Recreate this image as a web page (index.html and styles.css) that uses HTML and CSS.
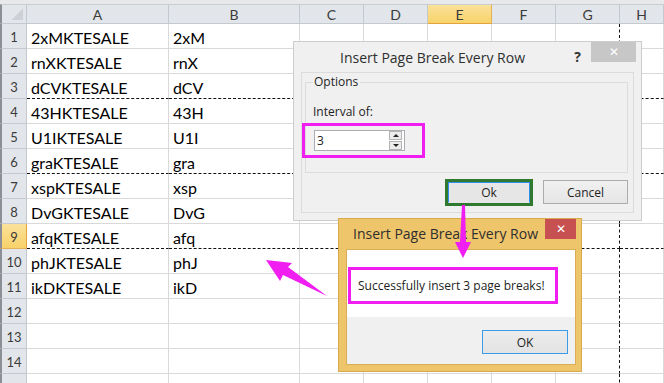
FILE: index.html
```html
<!DOCTYPE html>
<html lang="en">
<head>
  <meta charset="UTF-8" />
  <title>Insert Page Break Every Row</title>
  <link rel="stylesheet" href="styles.css">
</head>
<body>
  <div class="sheet">
    <table class="grid">
      <colgroup>
        <col class="c-hd"><col class="c-a"><col class="c-b">
        <col class="c-n"><col class="c-n"><col class="c-n"><col class="c-n"><col class="c-n">
        <col class="c-h">
      </colgroup>
      <thead>
        <tr>
          <th class="corner"></th><th>A</th><th>B</th><th>C</th><th>D</th>
          <th class="sel">E</th><th>F</th><th>G</th><th>H</th>
        </tr>
      </thead>
      <tbody>
        <tr><th>1</th><td>2xMKTESALE</td><td>2xM</td><td></td><td></td><td></td><td></td><td></td><td></td></tr>
        <tr><th>2</th><td>rnXKTESALE</td><td>rnX</td><td></td><td></td><td></td><td></td><td></td><td></td></tr>
        <tr class="brk"><th>3</th><td>dCVKTESALE</td><td>dCV</td><td></td><td></td><td></td><td></td><td></td><td></td></tr>
        <tr><th>4</th><td>43HKTESALE</td><td>43H</td><td></td><td></td><td></td><td></td><td></td><td></td></tr>
        <tr><th>5</th><td>U1IKTESALE</td><td>U1I</td><td></td><td></td><td></td><td></td><td></td><td></td></tr>
        <tr class="brk"><th>6</th><td>graKTESALE</td><td>gra</td><td></td><td></td><td></td><td></td><td></td><td></td></tr>
        <tr><th>7</th><td>xspKTESALE</td><td>xsp</td><td></td><td></td><td></td><td></td><td></td><td></td></tr>
        <tr><th>8</th><td>DvGKTESALE</td><td>DvG</td><td></td><td></td><td></td><td></td><td></td><td></td></tr>
        <tr class="brk"><th class="sel">9</th><td>afqKTESALE</td><td>afq</td><td></td><td></td><td></td><td></td><td></td><td></td></tr>
        <tr><th>10</th><td>phJKTESALE</td><td>phJ</td><td></td><td></td><td></td><td></td><td></td><td></td></tr>
        <tr><th>11</th><td>ikDKTESALE</td><td>ikD</td><td></td><td></td><td></td><td></td><td></td><td></td></tr>
        <tr><th>12</th><td></td><td></td><td></td><td></td><td></td><td></td><td></td><td></td></tr>
        <tr><th>13</th><td></td><td></td><td></td><td></td><td></td><td></td><td></td><td></td></tr>
        <tr><th>14</th><td></td><td></td><td></td><td></td><td></td><td></td><td></td><td></td></tr>
        <tr><th></th><td></td><td></td><td></td><td></td><td></td><td></td><td></td><td></td></tr>
      </tbody>
    </table>

    <!-- settings dialog -->
    <div class="dialog dlg-interval">
      <div class="titlebar">
        <span class="title">Insert Page Break Every Row</span>
        <span class="help">?</span>
        <span class="close">&#x2715;</span>
      </div>
      <div class="panel">
        <div class="group">
          <span class="legend">Options</span>
          <div class="field-label">Interval of:</div>
          <div class="mark-box">
            <div class="spin">
              <span class="spin-value">3</span>
              <span class="spin-btns">
                <span class="spin-up"></span>
                <span class="spin-down"></span>
              </span>
            </div>
          </div>
        </div>
        <div class="actions">
          <span class="mark-ok"><button class="btn btn-focus">Ok</button></span>
          <button class="btn btn-cancel">Cancel</button>
        </div>
      </div>
    </div>

    <!-- result message -->
    <div class="dialog dlg-done">
      <div class="titlebar">
        <span class="title">Insert Page Break Every Row</span>
        <span class="close close-red">&#x2715;</span>
      </div>
      <div class="msg-body">
        <div class="msg-top">
          <div class="msg-mark">Successfully insert 3 page breaks!</div>
        </div>
        <div class="msg-bottom">
          <button class="btn btn-ok">OK</button>
        </div>
      </div>
    </div>

    <svg class="arrows" width="664" height="383" viewBox="0 0 664 383">
      <polygon points="462,205 465,205 466,242 471,242 463,258 455,242 460,242" />
      <polygon points="266,260 292,263 288,267 327,296 283,275 280,281" />
    </svg>
  </div>
</body>
</html>
```

FILE: styles.css
```css
body {
  margin: 0;
  font-family: "Open Sans", "Noto Sans", sans-serif;
}
.sheet {
  position: relative;
  width: 664px;
  height: 383px;
  overflow: hidden;
  padding-top: 4px;
  box-sizing: border-box;
  background: linear-gradient(#e8e9eb 0, #e8e9eb 4px, #fff 4px);
}
.grid {
  width: 664px;
  table-layout: fixed;
  border-collapse: separate;
  border-spacing: 0;
}
.c-hd { width: 27px; }
.c-a { width: 142px; }
.c-b { width: 131px; }
.c-n { width: 64px; }
.c-h { width: 44px; }
.grid thead tr { height: 20px; }
.grid tbody tr { height: 25px; }
.grid th {
  padding: 0;
  font-family: "Lato", "Liberation Sans", sans-serif;
  font-weight: normal;
  font-size: 14px;
  color: #3b3b3b;
  background: #e2e5e9;
  border-right: 1px solid #c4c9cf;
  border-bottom: 1px solid #c4c9cf;
  text-align: center;
}
.grid thead th {
  border-top: 1px solid #c9cdd2;
}
.grid tbody th {
  font-size: 13px;
  border-left: 2px solid #8c9096;
  padding-top: 2px;
}
.grid th.corner {
  border-left: 2px solid #8c9096;
  background: linear-gradient(135deg, transparent 50%, #cdd1d6 50%) no-repeat right 3px bottom 3px / 11px 11px, #e2e5e9;
}
.grid th.sel {
  background: linear-gradient(#fbe29a, #f8d26a);
  border-bottom-color: #e3a33b;
  border-right-color: #e3b155;
}
.grid tbody th.sel {
  border-bottom-color: #e3b155;
  border-right-color: #e3a33b;
}
.grid td {
  padding: 3px 0 0 4px;
  font-family: "Lato", "Liberation Sans", sans-serif;
  font-size: 16px;
  color: #000;
  white-space: nowrap;
  overflow: hidden;
  border-right: 1px solid #d9d9d9;
  border-bottom: 1px solid #d9d9d9;
}
.grid tr.brk td {
  border-bottom: 1px dashed #111;
}
.grid td:nth-child(8) {
  border-right: 1px dashed #111;
}

/* dialogs */
.dialog {
  position: absolute;
  box-sizing: border-box;
  display: flex;
  flex-direction: column;
  font-size: 12px;
  color: #1e1e1e;
}
.titlebar {
  height: 30px;
  display: flex;
  align-items: flex-start;
  flex-shrink: 0;
}
.title {
  font-size: 14px;
  color: #2f2f2f;
  margin-top: 6px;
}
.help {
  margin-left: auto;
  margin-top: 5px;
  font-size: 14px;
  font-weight: bold;
  color: #333;
}
.close {
  width: 45px;
  height: 20px;
  margin: 0 5px 0 10px;
  background: #c7c7c7;
  color: #fff;
  font-size: 12px;
  line-height: 20px;
  text-align: center;
}

.dlg-interval {
  left: 293px;
  top: 41px;
  width: 349px;
  height: 180px;
  background: #f0f0f0;
  border: 1px solid #cdcdcd;
}
.dlg-interval .title {
  margin-left: 46px;
}
.panel {
  flex: 1;
  margin: 0 7px 7px 7px;
  border: 1px solid #dcdcdc;
  padding: 9px 5px 0 3px;
  display: flex;
  flex-direction: column;
}
.group {
  height: 91px;
  box-sizing: border-box;
  border: 1px solid #dcdcdc;
  padding: 0 0 0 7px;
}
.legend {
  display: block;
  width: fit-content;
  margin: -9px 0 0 0;
  padding: 0 2px 0 1px;
  line-height: 16px;
  background: #f0f0f0;
}
.field-label {
  margin-top: 14px;
  line-height: 16px;
}
.mark-box {
  width: 123px;
  height: 35px;
  box-sizing: border-box;
  margin: 3px 0 0 -11px;
  border: 3px solid #f01ef0;
  padding: 4px 0 0 9px;
}
.spin {
  width: 91px;
  height: 21px;
  box-sizing: border-box;
  background: #fff;
  border: 1px solid #acadb3;
  display: flex;
  align-items: center;
  padding: 0 2px 0 2px;
}
.spin-value {
  flex: 1;
  font-size: 12px;
}
.spin-btns {
  display: flex;
  flex-direction: column;
  gap: 1px;
}
.spin-up, .spin-down {
  width: 11px;
  height: 7px;
  border: 1px solid #b4b4b4;
  background: #ececec;
  display: flex;
  align-items: center;
  justify-content: center;
}
.spin-up::after {
  content: "";
  border: 3px solid transparent;
  border-bottom: 3px solid #222;
  border-top: 0;
}
.spin-down::after {
  content: "";
  border: 3px solid transparent;
  border-top: 3px solid #222;
  border-bottom: 0;
}
.actions {
  display: flex;
  justify-content: flex-end;
  align-items: flex-start;
  gap: 10px;
  margin-top: 5px;
}
.btn {
  font-family: "Open Sans", "Noto Sans", sans-serif;
  font-size: 12px;
  color: #1e1e1e;
  padding: 0;
  box-sizing: border-box;
  background: linear-gradient(#f0f0f0, #e5e5e5);
  border: 1px solid #acacac;
}
.mark-ok {
  display: block;
  border: 3px solid #2f7a2f;
  width: 88px;
  height: 27px;
  box-sizing: border-box;
  margin-top: 1px;
}
.btn-focus {
  display: block;
  width: 100%;
  height: 100%;
  border-color: #e5e5e5;
  border-left: 1px solid #2f8ef0;
  border-top: 1px solid #2f8ef0;
  border-right: 1px solid #2f8ef0;
  background: #e6e6e6;
}
.btn-cancel {
  width: 85px;
  height: 24px;
  margin-top: 2px;
}

.dlg-done {
  left: 338px;
  top: 218px;
  width: 244px;
  height: 154px;
  background: #efc56c;
  border: 1px solid #d8a94e;
}
.dlg-done .title {
  margin-left: 14px;
  margin-top: 5px;
}
.close-red {
  width: 31px;
  margin-left: auto;
  background: #c75050;
}
.msg-body {
  flex: 1;
  margin: 0 5px 6px 7px;
  border: 1px solid #d9ae57;
  display: flex;
  flex-direction: column;
}
.msg-top {
  height: 67px;
  background: #fff;
  padding: 17px 0 0 1px;
  box-sizing: border-box;
}
.msg-mark {
  width: 210px;
  height: 37px;
  box-sizing: border-box;
  border: 3px solid #f01ef0;
  padding: 7px 0 0 7px;
  white-space: nowrap;
  font-size: 12px;
}
.msg-bottom {
  flex: 1;
  background: #f0f0f0;
  display: flex;
  justify-content: flex-end;
  align-items: flex-start;
  padding: 13px 7px 0 0;
}
.btn-ok {
  width: 86px;
  height: 24px;
  border-color: #3c9be8;
  background: linear-gradient(#ececec, #e3e3e3);
}

.arrows {
  position: absolute;
  left: 0;
  top: 0;
  pointer-events: none;
  fill: #f01ef0;
}
```
